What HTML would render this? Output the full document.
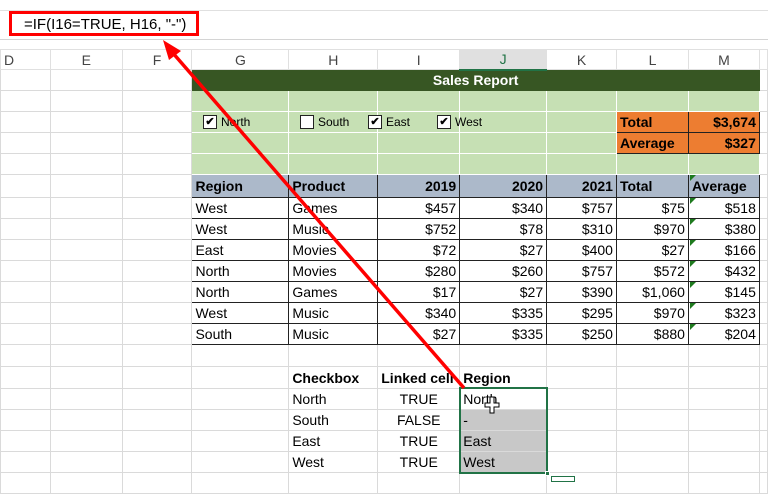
<!DOCTYPE html>
<html><head><meta charset="utf-8"><style>
*{margin:0;padding:0;box-sizing:border-box}
body{width:768px;height:479px;background:#fff;position:relative;overflow:hidden;font-family:"Liberation Sans",sans-serif;color:#000}
.fb{position:absolute;left:0;top:0;width:768px;height:40px;background:#fff;border-bottom:1px solid #d4d4d4}
.fb .line{position:absolute;left:0;top:10px;width:768px;border-top:1px solid #e0e0e0}
.box{position:absolute;left:9px;top:11px;width:190px;height:25px;border:3px solid #f00;font-size:15px;padding:2px 0 0 12px;background:#fff}
table{position:absolute;left:0;top:49px;border-collapse:collapse;table-layout:fixed;font-size:14px}
td{border:1px solid #dadada;white-space:nowrap;overflow:visible;padding:0 3px;line-height:1}
tr.h td{background:#fff;color:#444;text-align:center;font-size:14px;border-color:#e0e0e0}
tr.h td.sel{background:#e0e0e0;border-bottom:2px solid #217346;color:#217346}
.g{background:#c6e0b4;border-color:#fff}
.t{background:#375623;color:#fff;font-weight:bold;text-align:center;border-color:#375623}
.o{background:#ed7d31;font-weight:bold;border:1px solid #222}
.b{background:#acb9ca;font-weight:bold;border:1px solid #222}
.k{border:1px solid #222}
.r{text-align:right}
.c{text-align:center}
.gr{background:#c8c8c8}
.bo{font-weight:bold}
.cb{position:absolute;top:115px;width:14px;height:14px;border:1px solid #222;background:#fff;font-size:11px;line-height:12px;text-align:center;font-weight:bold}
.cl{position:absolute;top:115px;font-size:12px}
.tri{position:absolute;width:0;height:0;border-top:6px solid #1e7a1e;border-right:6px solid transparent}
</style></head><body>
<div class="fb"><div class="line"></div><div class="box">=IF(I16=TRUE, H16, "-")</div></div>
<table>
<colgroup><col style="width:50px"><col style="width:72px"><col style="width:70px"><col style="width:97px"><col style="width:89px"><col style="width:82px"><col style="width:87px"><col style="width:70px"><col style="width:72px"><col style="width:71px"><col style="width:8px"></colgroup>
<tr class="h" style="height:20px"><td style="text-align:left">D</td><td>E</td><td>F</td><td>G</td><td>H</td><td>I</td><td class="sel">J</td><td>K</td><td>L</td><td>M</td><td></td></tr>
<tr style="height:21px"><td></td><td></td><td></td><td class="t" colspan="7">Sales Report</td><td></td></tr>
<tr style="height:21px"><td></td><td></td><td></td><td class="g"></td><td class="g"></td><td class="g"></td><td class="g"></td><td class="g"></td><td class="g"></td><td class="g"></td><td></td></tr>
<tr style="height:21px"><td></td><td></td><td></td><td class="g"></td><td class="g"></td><td class="g"></td><td class="g"></td><td class="g"></td><td class="o">Total</td><td class="o r">$3,674</td><td></td></tr>
<tr style="height:21px"><td></td><td></td><td></td><td class="g"></td><td class="g"></td><td class="g"></td><td class="g"></td><td class="g"></td><td class="o">Average</td><td class="o r">$327</td><td></td></tr>
<tr style="height:21px"><td></td><td></td><td></td><td class="g"></td><td class="g"></td><td class="g"></td><td class="g"></td><td class="g"></td><td class="g"></td><td class="g"></td><td></td></tr>
<tr style="height:23px"><td></td><td></td><td></td><td class="b">Region</td><td class="b">Product</td><td class="b r">2019</td><td class="b r">2020</td><td class="b r">2021</td><td class="b">Total</td><td class="b">Average</td><td></td></tr>
<tr style="height:21px"><td></td><td></td><td></td><td class="k">West</td><td class="k">Games</td><td class="k r">$457</td><td class="k r">$340</td><td class="k r">$757</td><td class="k r">$75</td><td class="k r">$518</td><td></td></tr>
<tr style="height:21px"><td></td><td></td><td></td><td class="k">West</td><td class="k">Music</td><td class="k r">$752</td><td class="k r">$78</td><td class="k r">$310</td><td class="k r">$970</td><td class="k r">$380</td><td></td></tr>
<tr style="height:21px"><td></td><td></td><td></td><td class="k">East</td><td class="k">Movies</td><td class="k r">$72</td><td class="k r">$27</td><td class="k r">$400</td><td class="k r">$27</td><td class="k r">$166</td><td></td></tr>
<tr style="height:21px"><td></td><td></td><td></td><td class="k">North</td><td class="k">Movies</td><td class="k r">$280</td><td class="k r">$260</td><td class="k r">$757</td><td class="k r">$572</td><td class="k r">$432</td><td></td></tr>
<tr style="height:21px"><td></td><td></td><td></td><td class="k">North</td><td class="k">Games</td><td class="k r">$17</td><td class="k r">$27</td><td class="k r">$390</td><td class="k r">$1,060</td><td class="k r">$145</td><td></td></tr>
<tr style="height:21px"><td></td><td></td><td></td><td class="k">West</td><td class="k">Music</td><td class="k r">$340</td><td class="k r">$335</td><td class="k r">$295</td><td class="k r">$970</td><td class="k r">$323</td><td></td></tr>
<tr style="height:21px"><td></td><td></td><td></td><td class="k">South</td><td class="k">Music</td><td class="k r">$27</td><td class="k r">$335</td><td class="k r">$250</td><td class="k r">$880</td><td class="k r">$204</td><td></td></tr>
<tr style="height:22px"><td></td><td></td><td></td><td></td><td></td><td></td><td></td><td></td><td></td><td></td><td></td></tr>
<tr style="height:22px"><td></td><td></td><td></td><td></td><td class="bo">Checkbox</td><td class="bo">Linked cell</td><td class="bo">Region</td><td></td><td></td><td></td><td></td></tr>
<tr style="height:21px"><td></td><td></td><td></td><td></td><td>North</td><td class="c">TRUE</td><td>North</td><td></td><td></td><td></td><td></td></tr>
<tr style="height:21px"><td></td><td></td><td></td><td></td><td>South</td><td class="c">FALSE</td><td class="gr">-</td><td></td><td></td><td></td><td></td></tr>
<tr style="height:21px"><td></td><td></td><td></td><td></td><td>East</td><td class="c">TRUE</td><td class="gr">East</td><td></td><td></td><td></td><td></td></tr>
<tr style="height:21px"><td></td><td></td><td></td><td></td><td>West</td><td class="c">TRUE</td><td class="gr">West</td><td></td><td></td><td></td><td></td></tr>
<tr style="height:21px"><td></td><td></td><td></td><td></td><td></td><td></td><td></td><td></td><td></td><td></td><td></td></tr>
</table>
<div style="position:absolute;left:459px;top:387px;width:89px;height:87px;border:2px solid #217346"></div>
<div style="position:absolute;left:545px;top:471px;width:5px;height:5px;background:#217346;border:1px solid #fff"></div>
<div style="position:absolute;left:551px;top:476px;width:24px;height:6px;border:1px solid #217346"></div>
<div class="tri" style="left:690px;top:175px"></div>
<div class="tri" style="left:690px;top:198px"></div>
<div class="tri" style="left:690px;top:219px"></div>
<div class="tri" style="left:690px;top:240px"></div>
<div class="tri" style="left:690px;top:261px"></div>
<div class="tri" style="left:690px;top:282px"></div>
<div class="tri" style="left:690px;top:303px"></div>
<div class="tri" style="left:690px;top:324px"></div>
<div class="cb" style="left:203px">✔</div><div class="cl" style="left:221px">North</div>
<div class="cb" style="left:300px"></div><div class="cl" style="left:318px">South</div>
<div class="cb" style="left:368px">✔</div><div class="cl" style="left:386px">East</div>
<div class="cb" style="left:437px">✔</div><div class="cl" style="left:455px">West</div>
<svg style="position:absolute;left:0;top:0" width="768" height="479">
<line x1="464" y1="388" x2="172" y2="52" stroke="#f00" stroke-width="3.5"/>
<polygon points="163,40 181,51 169,60" fill="#f00"/>
<path d="M490 397 l0 6 -5 0 0 4 5 0 0 6 4 0 0 -6 5 0 0 -4 -5 0 0 -6z" fill="#fff" stroke="#000" stroke-width="1"/>
</svg>
</body></html>
